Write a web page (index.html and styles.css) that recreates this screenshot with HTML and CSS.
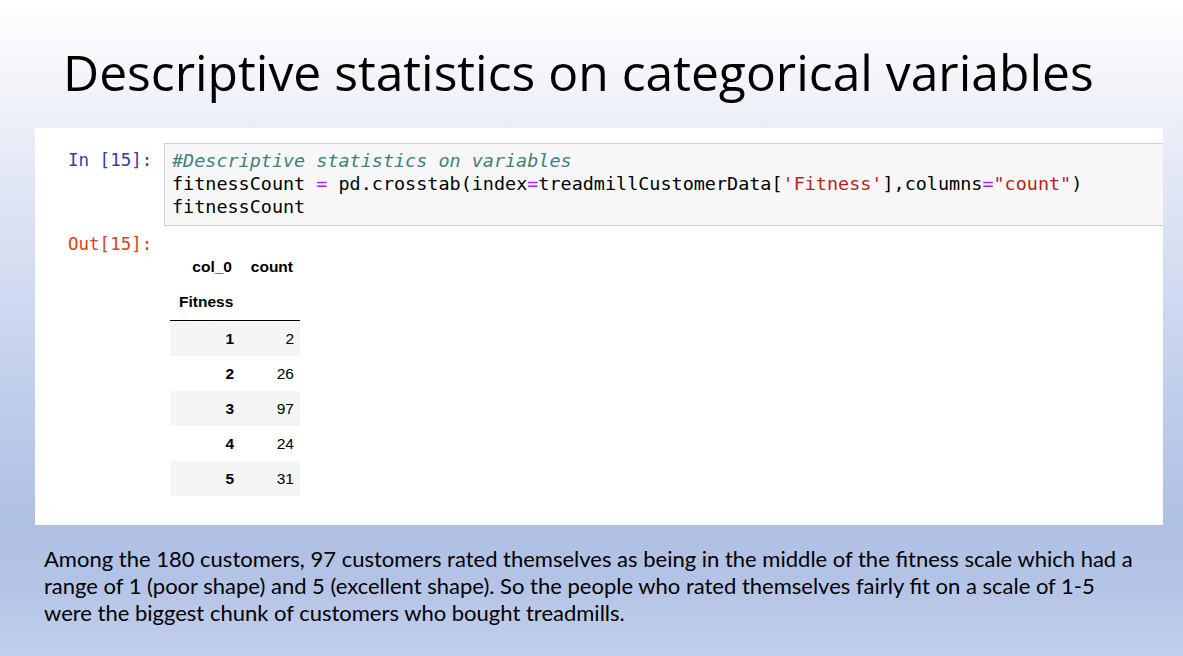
FILE: index.html
```html
<!DOCTYPE html>
<html>
<head>
<meta charset="utf-8">
<link rel="stylesheet" href="styles.css">
</head>
<body>
<div class="slide">
  <h1 class="title">Descriptive statistics on categorical variables</h1>
  <div class="panel">
    <div class="cell">
      <div class="prompt in">In&nbsp;[15]:</div>
      <div class="code"><span class="cm">#Descriptive statistics on variables</span>
fitnessCount <span class="op">=</span> pd.crosstab(index<span class="op">=</span>treadmillCustomerData[<span class="st">'Fitness'</span>],columns<span class="op">=</span><span class="st">"count"</span>)
fitnessCount</div>
    </div>
    <div class="cell out-cell">
      <div class="prompt out">Out[15]:</div>
      <table class="df">
        <thead>
          <tr class="col-row"><th class="idx">col_0</th><th>count</th></tr>
          <tr class="name-row"><th class="idx">Fitness</th><th></th></tr>
        </thead>
        <tbody>
          <tr><th>1</th><td>2</td></tr>
          <tr><th>2</th><td>26</td></tr>
          <tr><th>3</th><td>97</td></tr>
          <tr><th>4</th><td>24</td></tr>
          <tr><th>5</th><td>31</td></tr>
        </tbody>
      </table>
    </div>
  </div>
  <p class="summary">Among the 180 customers, 97 customers rated themselves as being in the middle of the fitness scale which had a range of 1 (poor shape) and 5 (excellent shape). So the people who rated themselves fairly fit on a scale of 1-5 were the biggest chunk of customers who bought treadmills.</p>
</div>
</body>
</html>
```
FILE: styles.css
```css
html, body {
  margin: 0;
  padding: 0;
}
body {
  width: 1183px;
  height: 656px;
  overflow: hidden;
}
.slide {
  width: 1183px;
  height: 656px;
  box-sizing: border-box;
  background: linear-gradient(to bottom, #ffffff 0%, #f1f3fa 14%, #dfe5f4 30%, #c6d2ed 55%, #aec0e4 80%, #b3c3e6 88%, #c3cfec 100%);
  display: flex;
  flex-direction: column;
}
.title {
  margin: 0;
  padding: 39px 0 0 63px;
  height: 90px;
  box-sizing: border-box;
  font-family: "Open Sans", sans-serif;
  font-weight: 400;
  font-size: 49.8px;
  line-height: 66px;
  color: #000;
}
.panel {
  margin: 38px 0 0 35px;
  width: 1128px;
  height: 397px;
  box-sizing: border-box;
  background: #fff;
  padding-top: 15px;
}
.cell {
  display: flex;
  align-items: flex-start;
}
.prompt {
  width: 129px;
  box-sizing: border-box;
  padding-left: 33px;
  font-family: "DejaVu Sans Mono", monospace;
  font-size: 17.5px;
  line-height: 23px;
  padding-top: 6px;
  white-space: pre;
}
.in { color: #303f9f; }
.out { color: #d84315; }
.code {
  flex: 1;
  background: #f7f7f7;
  border: 1px solid #cfcfcf;
  border-right: none;
  height: 83px;
  box-sizing: border-box;
  padding: 5px 0 0 7px;
  font-family: "DejaVu Sans Mono", monospace;
  font-size: 18.45px;
  line-height: 23px;
  white-space: pre;
  color: #000;
}
.cm { color: #408080; font-style: italic; }
.op { color: #aa22ff; }
.st { color: #ba2121; }
.out-cell {
  margin-top: 5px;
}
.out-cell .prompt { padding-top: 2px; }
.df {
  border-collapse: collapse;
  margin-top: 26px;
  margin-left: 6px;
  font-family: "Liberation Sans", Arial, sans-serif;
  font-size: 15.5px;
  color: #000;
}
.df th, .df td {
  text-align: right;
  padding: 0;
  height: 35px;
}
.df th { font-weight: bold; }
.df .col-row th { height: 26px; vertical-align: top; padding-top: 1px; }
.df .col-row th.idx { padding-right: 13px; }
.df .col-row th:last-child { padding-right: 7px; }
.df .name-row th { height: 36px; border-bottom: 1.5px solid #000; vertical-align: middle; }
.df .name-row th.idx { text-align: left; padding-left: 9px; }
.df tbody th { width: 64px; padding-right: 11px; }
.df tbody td { width: 49px; padding-right: 6px; font-weight: normal; }
.df tbody tr:nth-child(odd) { background: #f5f5f5; }
.summary {
  margin: 20px 0 0 44px;
  width: 1098px;
  font-family: "Lato", sans-serif;
  font-size: 22px;
  line-height: 27px;
  color: #000;
}
```
